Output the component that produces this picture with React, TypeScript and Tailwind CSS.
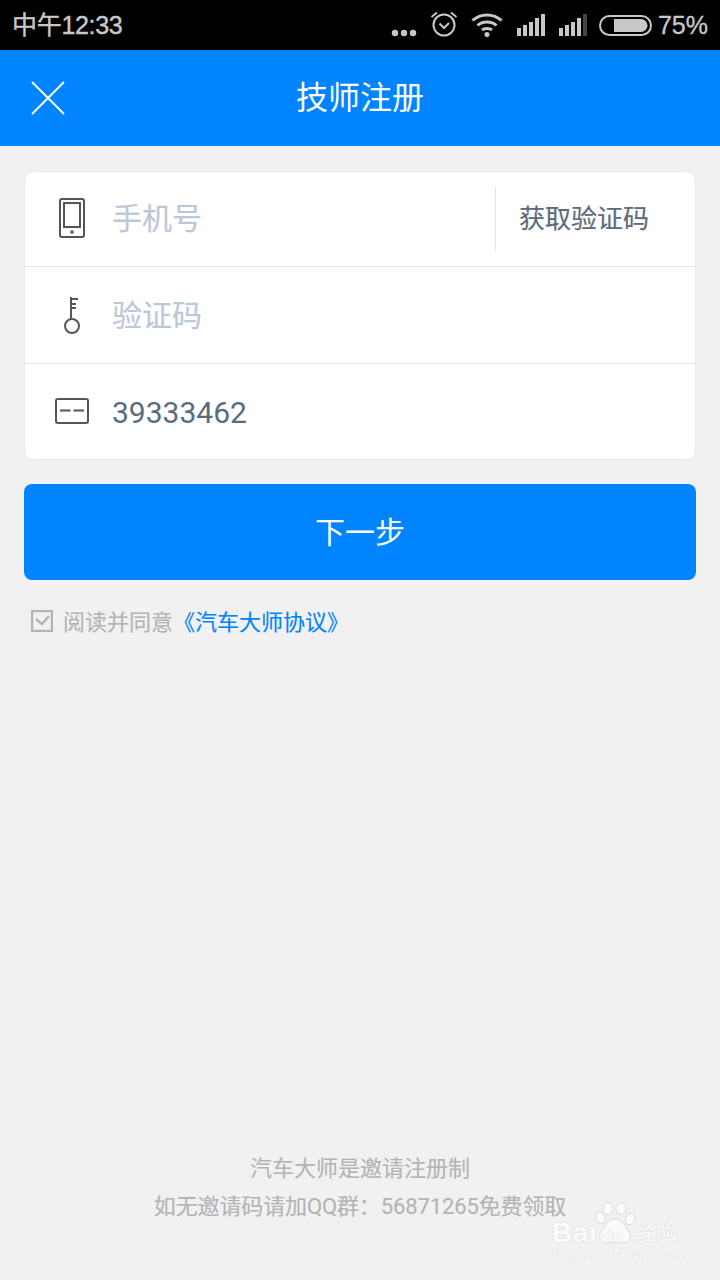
const cjk = { fontFamily: '"Roboto", "Noto Sans CJK SC", sans-serif' };

function StatusIcons() {
  return (
    <div className="flex items-center">
      <svg width="26" height="8" viewBox="0 0 26 8" className="mt-[16px] mr-[13px]" fill="#c8c8c8">
        <circle cx="4" cy="4" r="3.2" />
        <circle cx="13" cy="4" r="3.2" />
        <circle cx="22" cy="4" r="3.2" />
      </svg>
      <svg width="28" height="28" viewBox="0 0 28 28" className="mr-[13px] -mt-[2px]" fill="none" stroke="#c8c8c8" strokeWidth="2">
        <circle cx="14" cy="15" r="10.5" />
        <path d="M9.5 13.5 L14 18 L19 13" />
        <path d="M1.5 7 L7 2.5 M26.5 7 L21 2.5" />
      </svg>
      <svg width="32" height="26" viewBox="0 0 32 26" className="mr-[14px]" fill="none" stroke="#c8c8c8" strokeWidth="3">
        <path d="M1.5 8.5 C9.5 1 22.5 1 30.5 8.5" />
        <path d="M6.5 13.5 C11.5 8.8 20.5 8.8 25.5 13.5" />
        <path d="M11 18 C13.5 16 18.5 16 21 18" />
        <circle cx="16" cy="22.5" r="2.5" fill="#c8c8c8" stroke="none" />
      </svg>
      <svg width="28" height="22" viewBox="0 0 28 22" className="mr-[14px]" fill="#c8c8c8">
        <rect x="0" y="14" width="4" height="8" />
        <rect x="6" y="11" width="4" height="11" />
        <rect x="12" y="8" width="4" height="14" />
        <rect x="18" y="4" width="4" height="18" />
        <rect x="24" y="0" width="4" height="22" />
      </svg>
      <svg width="28" height="22" viewBox="0 0 28 22" className="mr-[12px]" fill="#c8c8c8">
        <rect x="0" y="14" width="4" height="8" />
        <rect x="6" y="11" width="4" height="11" />
        <rect x="12" y="8" width="4" height="14" />
        <rect x="18" y="4" width="4" height="18" />
        <rect x="24" y="0" width="4" height="22" fill="#444" />
      </svg>
      <svg width="53" height="21" viewBox="0 0 53 21" className="mr-[6px]" fill="none">
        <rect x="1" y="1" width="51" height="19" rx="9.5" stroke="#c8c8c8" strokeWidth="2" />
        <path d="M15 4 H42 A6.5 6.5 0 0 1 42 17 H15 Z" fill="#c8c8c8" />
      </svg>
      <span className="text-[25px] leading-none text-[#c8c8c8] [-webkit-text-stroke:0.3px_#c8c8c8]" style={{ fontFamily: '"Liberation Sans", sans-serif' }}>75%</span>
    </div>
  );
}

function PhoneIcon() {
  return (
    <svg width="28" height="40" viewBox="0 0 28 40" fill="none" stroke="#555" strokeWidth="2" className="-mt-[2px]">
      <rect x="2" y="1" width="24" height="38" rx="2" />
      <rect x="6" y="5" width="16" height="24" />
      <circle cx="14" cy="34" r="1.8" fill="#555" stroke="none" />
    </svg>
  );
}

function KeyIcon() {
  return (
    <svg width="18" height="38" viewBox="0 0 18 38" fill="none" stroke="#555" strokeWidth="2">
      <circle cx="9" cy="30" r="7" />
      <path d="M8 23 V1 M8 3 H15 M8 8 H13 M8 12 H13" />
    </svg>
  );
}

function CardIcon() {
  return (
    <svg width="34" height="26" viewBox="0 0 34 26" fill="none" stroke="#555" strokeWidth="2" className="-mt-[2px]">
      <rect x="1" y="1" width="32" height="24" rx="2" />
      <path d="M5 12.5 H15.5 M18.5 12.5 H29" />
    </svg>
  );
}

function Watermark() {
  return (
    <div className="absolute left-[552px] top-[1200px] h-[66px] w-[132px] text-[#fbfbfb] [text-shadow:0_0_1.5px_#cfcfcf]" style={{ fontFamily: '"Liberation Sans", sans-serif' }}>
      <svg width="42" height="46" viewBox="0 0 42 46" className="absolute left-[43px] top-[2px]" fill="#fbfbfb" stroke="#dadada" strokeWidth="1">
        <ellipse cx="5.5" cy="16" rx="4.5" ry="6" transform="rotate(-25 5.5 16)" />
        <ellipse cx="13" cy="6.5" rx="5" ry="6" />
        <ellipse cx="26" cy="6.5" rx="5" ry="6" />
        <ellipse cx="35" cy="17" rx="4.5" ry="6" transform="rotate(25 35 17)" />
        <path d="M20 17 C27 17 29 24 33 28 C37 33 35 41 28 41 C24 41 22 40 20 40 C18 40 15 41 11 41 C4 41 3 33 7 28 C11 24 13 17 20 17 Z" />
      </svg>
      <span className="absolute left-0 top-[19px] text-[28px] font-bold leading-none tracking-[0.5px]">Bai</span>
      <span className="absolute left-[50px] top-[27px] text-[17px] font-bold leading-none [text-shadow:0_0_1px_#bdbdbd]">du</span>
      <span className="absolute left-[82px] top-[21px] whitespace-nowrap text-[22px] leading-none" style={cjk}>经验</span>
      <span className="absolute left-[1px] top-[47px] whitespace-nowrap text-[15px] leading-none tracking-[0.5px]">jingyan.baidu.com</span>
    </div>
  );
}

export default function App() {
  return (
    <div className="relative flex h-[1280px] w-[720px] flex-col overflow-hidden bg-[#f1f1f1]" style={cjk}>
      <div className="flex h-[50px] shrink-0 items-center justify-between bg-black pl-[12px] pr-[12px]">
        <span className="text-[25px] leading-none tracking-[-0.3px] text-[#c8c8c8] [-webkit-text-stroke:0.4px_#c8c8c8]" style={{ fontFamily: '"Liberation Sans", "Noto Sans CJK SC", sans-serif' }}>中午12:33</span>
        <StatusIcons />
      </div>

      <div className="relative flex h-[96px] shrink-0 items-center justify-center bg-[#0084ff]">
        <svg width="34" height="34" viewBox="0 0 34 34" className="absolute left-[31px] top-[31px]" stroke="#fff" strokeWidth="2" fill="none">
          <path d="M1 1 L33 33 M33 1 L1 33" />
        </svg>
        <h1 className="text-[32px] font-normal leading-none text-white">技师注册</h1>
      </div>

      <div className="mx-[24px] mt-[25px] h-[289px] rounded-[10px] border border-[#ebebeb] bg-white">
        <div className="flex h-[95px] items-center border-b border-[#e4e4e4]">
          <div className="flex w-[87px] shrink-0 justify-center pl-[7px]"><PhoneIcon /></div>
          <span className="flex-1 text-[30px] leading-none text-[#bcc8da] [-webkit-text-stroke:0.2px_#bcc8da]">手机号</span>
          <div className="flex h-[64px] w-[200px] items-center border-l border-[#e4e4e4] pl-[23px] text-[26px] leading-none text-[#5d6b7d] [-webkit-text-stroke:0.2px_#5d6b7d]">获取验证码</div>
        </div>
        <div className="flex h-[97px] items-center border-b border-[#e4e4e4]">
          <div className="flex w-[87px] shrink-0 justify-center pl-[7px]"><KeyIcon /></div>
          <span className="pt-[2px] text-[30px] leading-none text-[#bcc8da] [-webkit-text-stroke:0.2px_#bcc8da]">验证码</span>
        </div>
        <div className="flex h-[95px] items-center">
          <div className="flex w-[87px] shrink-0 justify-center pl-[6px]"><CardIcon /></div>
          <span className="pt-[2px] text-[30px] leading-none text-[#5a6b80]">39333462</span>
        </div>
      </div>

      <button className="mx-[24px] mt-[24px] flex h-[96px] items-center justify-center rounded-[8px] bg-[#0084ff] pt-[2px] text-[30px] leading-none text-white">下一步</button>

      <div className="ml-[31px] mt-[30px] flex h-[24px] items-center">
        <svg width="22" height="22" viewBox="0 0 22 22" fill="none" stroke="#b4b4b4" strokeWidth="2.4" className="-mt-[3px] mr-[10px]">
          <rect x="1" y="1" width="20" height="20" />
          <path d="M5 9 L11 14 L18 6" />
        </svg>
        <span className="pt-[2px] text-[22px] leading-none text-[#b4b4b4] [-webkit-text-stroke:0.15px_#b4b4b4]">阅读并同意</span>
        <span className="pt-[2px] text-[22px] leading-none text-[#0084ff] [-webkit-text-stroke:0.15px_#0084ff]">《汽车大师协议》</span>
      </div>

      <div className="mt-auto mb-[63px] flex flex-col items-center gap-[17px] text-[22px] leading-[21px] text-[#b4b4b4] [-webkit-text-stroke:0.15px_#b4b4b4]">
        <p>汽车大师是邀请注册制</p>
        <p className="tracking-[-0.12px]">如无邀请码请加QQ群：56871265免费领取</p>
      </div>

      <Watermark />
    </div>
  );
}
